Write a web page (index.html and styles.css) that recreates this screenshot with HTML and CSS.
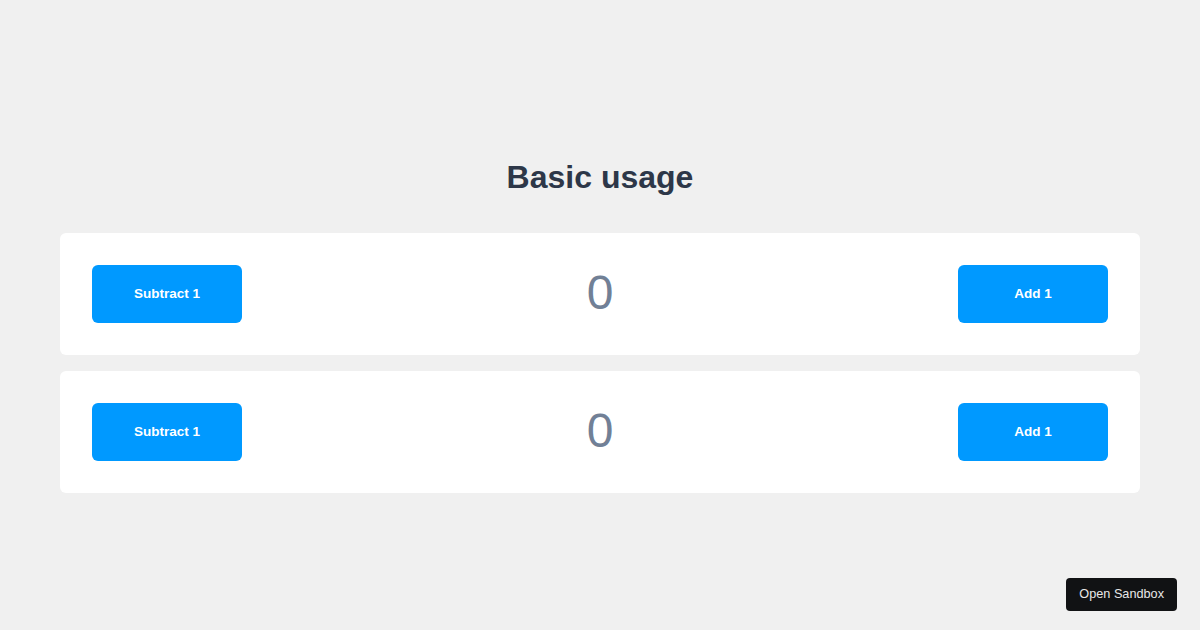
FILE: index.html
```html
<!DOCTYPE html>
<html lang="en">
<head>
  <meta charset="UTF-8">
  <meta name="viewport" content="width=device-width, initial-scale=1.0">
  <title>Basic usage</title>
  <link rel="stylesheet" href="styles.css">
</head>
<body>
  <main class="page">
    <h1>Basic usage</h1>

    <div class="counter">
      <button class="btn">Subtract 1</button>
      <span class="count">0</span>
      <button class="btn">Add 1</button>
    </div>

    <div class="counter">
      <button class="btn">Subtract 1</button>
      <span class="count">0</span>
      <button class="btn">Add 1</button>
    </div>
  </main>

  <a class="sandbox" href="#">Open Sandbox</a>
</body>
</html>
```

FILE: styles.css
```css
body {
  margin: 0;
  background-color: #f0f0f0;
  font-family: "Liberation Sans", Arial, sans-serif;
}
.page {
  padding: 158px 60px 0;
}
h1 {
  margin: 0 0 37px;
  font-size: 32px;
  line-height: 38px;
  text-align: center;
  color: #2d3748;
}
.counter {
  display: flex;
  align-items: center;
  justify-content: space-between;
  background-color: white;
  border-radius: 6px;
  padding: 32px;
  margin-bottom: 16px;
}
.btn {
  width: 150px;
  height: 58px;
  padding: 0 0 2px;
  background-color: #0099ff;
  color: white;
  border: none;
  border-radius: 6px;
  font-family: inherit;
  font-size: 13.5px;
  font-weight: bold;
  cursor: pointer;
}
.count {
  margin-bottom: 2px;
  font-size: 48px;
  line-height: 1;
  color: #718096;
}
.sandbox {
  position: fixed;
  right: 23px;
  bottom: 19px;
  padding: 0 13px;
  height: 33px;
  line-height: 33px;
  background-color: #111214;
  color: #e8e8e8;
  border-radius: 4px;
  font-size: 12.7px;
  text-decoration: none;
}
```
